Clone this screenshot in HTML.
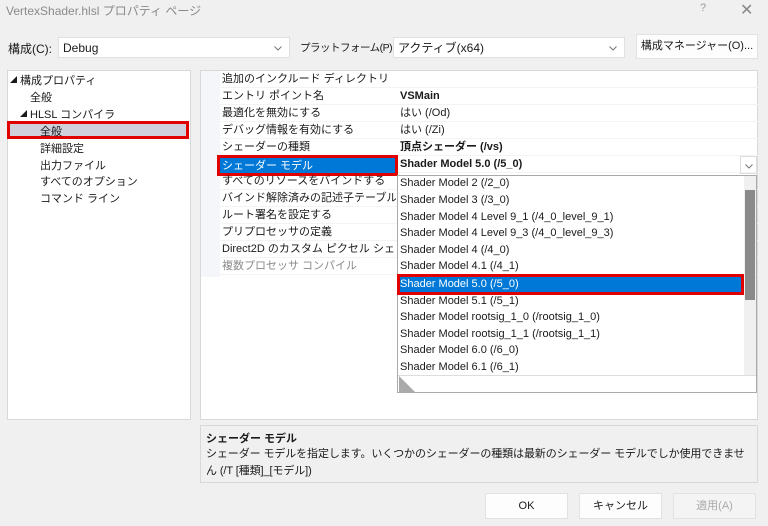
<html><head><style>
body{margin:0;width:768px;height:526px;background:#f0f0f0;font-family:"Liberation Sans","Noto Sans CJK JP",sans-serif;font-size:11px;color:#1a1a1a;position:relative;overflow:hidden}
.a{position:absolute;white-space:nowrap}
.combo{position:absolute;background:#fff;border:1px solid #e0e0e0;height:21px;line-height:20px;padding-left:4px;box-sizing:border-box;font-size:12px}
.chev{position:absolute;right:7px;top:8px}
.btn{position:absolute;background:#fdfdfd;border:1px solid #e2e2e2;box-sizing:border-box;text-align:center}
.row{position:absolute;left:220px;width:538px;height:17px;line-height:17px;border-bottom:1px solid #f3f3f3;box-sizing:border-box}
.row span{position:absolute;left:2px;width:174px;overflow:hidden;white-space:nowrap}
.row b{position:absolute;left:180px}
.it{position:absolute;left:400px;height:17px;line-height:17px}
.tri{font-size:7px;vertical-align:2px;margin-right:3px}
</style></head><body>
<div class="a" style="left:6px;top:2px;color:#8a8a8a;font-size:12px">VertexShader.hlsl プロパティ ページ</div>
<div class="a" style="left:700px;top:2px;color:#999">?</div>
<div class="a" style="left:740px;top:0px;color:#888;font-size:16px">✕</div>
<div class="a" style="left:8px;top:40px;font-size:12px">構成(C):</div>
<div class="combo" style="left:58px;top:37px;width:232px">Debug<svg class="chev" width="8" height="5"><path d="M0.5 0.5L4 4L7.5 0.5" stroke="#777" fill="none"/></svg></div>
<div class="a" style="left:300px;top:40px;font-size:10.5px;letter-spacing:-0.5px">プラットフォーム(P):</div>
<div class="combo" style="left:393px;top:37px;width:232px">アクティブ(x64)<svg class="chev" width="8" height="5"><path d="M0.5 0.5L4 4L7.5 0.5" stroke="#777" fill="none"/></svg></div>
<div class="btn" style="left:636px;top:34px;width:122px;height:25px;line-height:23px;font-size:11px">構成マネージャー(O)...</div>

<div class="a" style="left:7px;top:70px;width:184px;height:350px;background:#fff;border:1px solid #d8d8d8;box-sizing:border-box"></div>
<div class="a" style="left:10px;top:72px"><span class="tri">◢</span>構成プロパティ</div>
<div class="a" style="left:30px;top:89px">全般</div>
<div class="a" style="left:20px;top:106px"><span class="tri">◢</span>HLSL コンパイラ</div>
<div class="a" style="left:7px;top:121px;width:182px;height:18px;background:#cfd0dc;border:3px solid #e00000;box-sizing:border-box"></div>
<div class="a" style="left:40px;top:123px">全般</div>
<div class="a" style="left:40px;top:140px">詳細設定</div>
<div class="a" style="left:40px;top:157px">出力ファイル</div>
<div class="a" style="left:40px;top:173px">すべてのオプション</div>
<div class="a" style="left:40px;top:190px">コマンド ライン</div>

<div class="a" style="left:200px;top:70px;width:558px;height:350px;background:#fff;border:1px solid #d8d8d8;box-sizing:border-box"></div>
<div class="a" style="left:201px;top:71px;width:19px;height:206px;background:#f4f6fa"></div>
<div class="row" style="top:71px"><span>追加のインクルード ディレクトリ</span></div>
<div class="row" style="top:88px"><span>エントリ ポイント名</span><b>VSMain</b></div>
<div class="row" style="top:105px"><span>最適化を無効にする</span><b style="font-weight:normal">はい (/Od)</b></div>
<div class="row" style="top:122px"><span>デバッグ情報を有効にする</span><b style="font-weight:normal">はい (/Zi)</b></div>
<div class="row" style="top:139px"><span>シェーダーの種類</span><b>頂点シェーダー (/vs)</b></div>
<div class="row" style="top:156px"><span style="color:#fff">シェーダー モデル</span><b>Shader Model 5.0 (/5_0)</b></div>
<div class="a" style="left:217px;top:155px;width:181px;height:21px;background:#0078d7;border:3px solid #e00000;box-sizing:border-box"></div>
<div class="a" style="left:222px;top:157px;color:#fff">シェーダー モデル</div>
<div class="a" style="left:740px;top:156px;width:17px;height:18px;border:1px solid #ddd;box-sizing:border-box"><svg style="position:absolute;left:4px;top:7px" width="8" height="5"><path d="M0.5 0.5L4 4L7.5 0.5" stroke="#777" fill="none"/></svg></div>
<div class="row" style="top:173px"><span>すべてのリソースをバインドする</span></div>
<div class="row" style="top:190px"><span>バインド解除済みの記述子テーブルを有効</span></div>
<div class="row" style="top:207px"><span>ルート署名を設定する</span></div>
<div class="row" style="top:224px"><span>プリプロセッサの定義</span></div>
<div class="row" style="top:241px"><span>Direct2D のカスタム ピクセル シェーダー</span></div>
<div class="row" style="top:258px"><span style="color:#8a8a8a">複数プロセッサ コンパイル</span></div>

<div class="a" style="left:397px;top:175px;width:360px;height:218px;background:#fff;border:1px solid #aaa;box-sizing:border-box"></div>
<div class="a" style="left:744px;top:176px;width:12px;height:200px;background:#f0f0f0"></div>
<div class="a" style="left:745px;top:190px;width:10px;height:110px;background:#8a8a8a"></div>
<div class="a" style="left:398px;top:375px;width:358px;height:1px;background:#ddd"></div>
<div class="a" style="left:399px;top:376px;width:0;height:0;border-left:16px solid #aaa;border-top:16px solid transparent"></div>
<div class="it" style="top:175px">Shader Model 2 (/2_0)</div>
<div class="it" style="top:192px">Shader Model 3 (/3_0)</div>
<div class="it" style="top:209px">Shader Model 4 Level 9_1 (/4_0_level_9_1)</div>
<div class="it" style="top:225px">Shader Model 4 Level 9_3 (/4_0_level_9_3)</div>
<div class="it" style="top:242px">Shader Model 4 (/4_0)</div>
<div class="it" style="top:258px">Shader Model 4.1 (/4_1)</div>
<div class="a" style="left:397px;top:274px;width:347px;height:21px;background:#0078d7;border:3px solid #e00000;box-sizing:border-box"></div>
<div class="it" style="top:276px;color:#fff">Shader Model 5.0 (/5_0)</div>
<div class="it" style="top:293px">Shader Model 5.1 (/5_1)</div>
<div class="it" style="top:309px">Shader Model rootsig_1_0 (/rootsig_1_0)</div>
<div class="it" style="top:326px">Shader Model rootsig_1_1 (/rootsig_1_1)</div>
<div class="it" style="top:342px">Shader Model 6.0 (/6_0)</div>
<div class="it" style="top:359px;height:16px;overflow:hidden">Shader Model 6.1 (/6_1)</div>

<div class="a" style="left:200px;top:425px;width:558px;height:58px;background:#f0f0f0;border:1px solid #d8d8d8;box-sizing:border-box"></div>
<div class="a" style="left:206px;top:430px;font-weight:bold">シェーダー モデル</div>
<div class="a" style="left:206px;top:446px;white-space:normal;width:548px;line-height:17px;letter-spacing:-0.1px;word-break:break-all">シェーダー モデルを指定します。いくつかのシェーダーの種類は最新のシェーダー モデルでしか使用できません (/T [種類]_[モデル])</div>

<div class="btn" style="left:485px;top:493px;width:83px;height:26px;line-height:24px">OK</div>
<div class="btn" style="left:579px;top:493px;width:83px;height:26px;line-height:24px">キャンセル</div>
<div class="btn" style="left:673px;top:493px;width:83px;height:26px;line-height:24px;color:#aaa;background:#f4f4f4">適用(A)</div>
</body></html>
